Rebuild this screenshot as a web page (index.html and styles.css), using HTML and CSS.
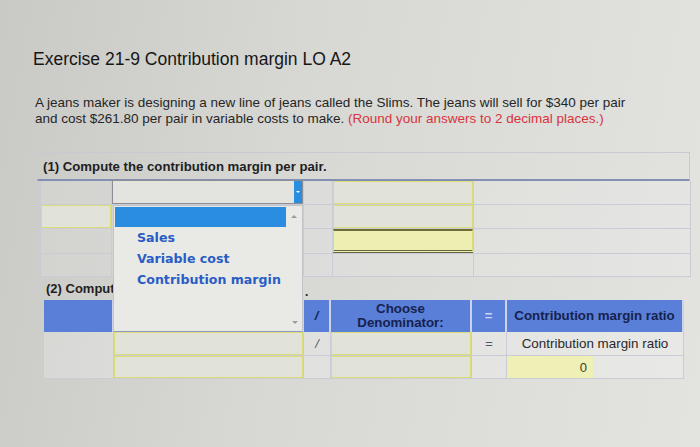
FILE: index.html
```html
<!DOCTYPE html>
<html>
<head>
<meta charset="utf-8">
<link rel="stylesheet" href="styles.css">
</head>
<body>
<div class="page">
  <h1 class="title">Exercise 21-9 Contribution margin LO A2</h1>
  <p class="intro">A jeans maker is designing a new line of jeans called the Slims. The jeans will sell for $340 per pair<br>and cost $261.80 per pair in variable costs to make. <span class="red">(Round your answers to 2 decimal places.)</span></p>

  <section class="part1">
    <div class="p1-head">(1) Compute the contribution margin per pair.</div>
    <div class="p1-grid">
      <div class="c"></div>
      <div class="c sel-cell"><div class="select"><span class="sel-btn"><span class="tri-down-w"></span></span></div></div>
      <div class="c"></div>
      <div class="c"><div class="yin"></div></div>
      <div class="c"></div>

      <div class="c"><div class="yin"></div></div>
      <div class="c"></div>
      <div class="c"></div>
      <div class="c"><div class="yin"></div></div>
      <div class="c"></div>

      <div class="c"></div>
      <div class="c"></div>
      <div class="c"></div>
      <div class="c"><div class="ytotal"></div></div>
      <div class="c"></div>

      <div class="c"></div>
      <div class="c"></div>
      <div class="c"></div>
      <div class="c"></div>
      <div class="c"></div>
    </div>
  </section>

  <section class="part2">
    <div class="p2-head"><span class="p2-label">(2) Comput</span><span class="dot">.</span></div>
    <div class="p2-grid">
      <div class="h"></div>
      <div class="h"></div>
      <div class="h slash">/</div>
      <div class="h">Choose<br>Denominator:</div>
      <div class="h eq">=</div>
      <div class="h">Contribution margin ratio</div>

      <div class="b merged"></div>
      <div class="b"><div class="yin"></div></div>
      <div class="b sym">/</div>
      <div class="b"><div class="yin"></div></div>
      <div class="b sym eqb">=</div>
      <div class="b txt">Contribution margin ratio</div>

      <div class="b"><div class="yin"></div></div>
      <div class="b"></div>
      <div class="b"><div class="yin"></div></div>
      <div class="b"></div>
      <div class="b res"><div class="yres">0</div></div>
    </div>
  </section>

  <div class="dropdown">
    <div class="dd-hl"></div>
    <div class="dd-item">Sales</div>
    <div class="dd-item">Variable cost</div>
    <div class="dd-item">Contribution margin</div>
    <span class="sb-up"></span>
    <span class="sb-down"></span>
  </div>
</div>
</body>
</html>
```

FILE: styles.css
```css
html, body {
  margin: 0;
  padding: 0;
}
body {
  width: 700px;
  height: 447px;
  overflow: hidden;
  background: linear-gradient(100deg, #c9c9c5 0%, #d7d7d4 40%, #e3e3e0 100%);
  font-family: "Liberation Sans", Arial, sans-serif;
  color: #1e1e1e;
}
.page {
  position: relative;
  padding: 48px 0 0 0;
}
.title {
  margin: 0 0 25px 33px;
  font-size: 17.5px;
  line-height: 22px;
  font-weight: normal;
  color: #161616;
}
.intro {
  margin: 0 0 25px 35px;
  font-size: 13.5px;
  line-height: 16px;
  color: #262626;
}
.red {
  color: #d8343c;
}

/* Part 1 */
.part1 {
  margin-left: 37px;
  width: 653px;
}
.p1-head {
  height: 26px;
  line-height: 27px;
  padding-left: 5px;
  font-size: 13.2px;
  font-weight: bold;
  color: #1f1f22;
  border: 1px solid #c7cad3;
  border-bottom: 2px solid #8290b4;
}
.p1-grid {
  margin-left: 3px;
  display: grid;
  grid-template-columns: 71px 192px 29px 141px 217px;
  grid-template-rows: 24px 24px 25px 23px;
  border-left: 1px solid #c9ccd6;
}
.c {
  border-right: 1px solid #c9ccd6;
  border-bottom: 1px solid #c9ccd6;
  display: flex;
  background: rgba(255, 255, 255, 0.12);
}
.yin {
  flex: 1;
  border: 1px solid #dcdc78;
  background: #e2e3d8;
}
.ytotal {
  flex: 1;
  border-top: 2px solid #6e6e34;
  border-bottom: 3px double #66663c;
  border-left: 1px solid #dcdc78;
  border-right: 1px solid #dcdc78;
  background: #eceeb2;
}
.select {
  flex: 1;
  display: flex;
  justify-content: flex-end;
  border: 1px solid #8c8e94;
  background: #e3e3df;
  margin-top: -1px;
}
.sel-btn {
  width: 8px;
  background: #2a8ee0;
  display: flex;
  align-items: center;
  justify-content: center;
}
.tri-down-w {
  width: 0;
  height: 0;
  border-left: 2px solid transparent;
  border-right: 2px solid transparent;
  border-top: 2px solid #ffffff;
}

/* Part 2 */
.part2 {
  margin-left: 43px;
  width: 640px;
}
.p2-head {
  height: 23px;
  line-height: 22px;
  padding-left: 2px;
  font-size: 13px;
  font-weight: bold;
  color: #1f1f22;
  border-left: 1px solid #c9ccd6;
  display: flex;
  align-items: center;
}
.p2-label {
  display: inline-block;
  width: 68px;
  white-space: nowrap;
}
.dot {
  margin-left: 191px;
  margin-top: 6px;
  font-size: 12px;
}
.p2-grid {
  display: grid;
  grid-template-columns: 70px 190px 27px 141px 35px 177px;
  grid-template-rows: 32px 24px 23px;
  border-left: 1px solid #c9ccd6;
}
.h {
  background: #5a7fd8;
  border-right: 2px solid #cdd3e4;
  color: #16224e;
  font-size: 13.3px;
  font-weight: bold;
  display: flex;
  align-items: center;
  justify-content: center;
  text-align: center;
  line-height: 14px;
}
.h:last-child {
  border-right: none;
}
.h.slash {
  font-style: italic;
  font-size: 13px;
}
.h.eq {
  color: #cfd8f2;
  font-size: 13px;
}
.b {
  border-right: 1px solid #c9ccd6;
  border-bottom: 1px solid #c9ccd6;
  background: rgba(255, 255, 255, 0.22);
  display: flex;
}
.b.merged {
  grid-row: span 2;
}
.b.sym {
  align-items: center;
  justify-content: center;
  color: #55585e;
  font-size: 13px;
  font-style: italic;
}
.b.sym.eqb {
  font-style: normal;
}
.b.txt {
  align-items: center;
  justify-content: center;
  font-size: 13.4px;
  color: #2a2a2c;
}
.yres {
  width: 80px;
  padding-right: 6px;
  background: #eef0b6;
  text-align: right;
  font-size: 13px;
  line-height: 23px;
  color: #3a3a3a;
}

/* Dropdown overlay */
.dropdown {
  position: absolute;
  left: 113px;
  top: 205px;
  width: 188px;
  height: 125px;
  background: #e9e9e6;
  border: 1px solid #c3c4c8;
  border-bottom: 1px solid #8d9ac4;
}
.dd-hl {
  margin: 1px 0 0 1px;
  width: 171px;
  height: 20px;
  background: #2b8de0;
}
.dd-item {
  padding-left: 23px;
  height: 21px;
  line-height: 21px;
  font-family: "DejaVu Sans", Verdana, sans-serif;
  font-weight: bold;
  font-size: 12.6px;
  color: #2a5dc4;
}
.sb-up {
  position: absolute;
  left: 177px;
  top: 9px;
  width: 0;
  height: 0;
  border-left: 3px solid transparent;
  border-right: 3px solid transparent;
  border-bottom: 3px solid #9a9ca2;
}
.sb-down {
  position: absolute;
  left: 178px;
  top: 115px;
  width: 0;
  height: 0;
  border-left: 3px solid transparent;
  border-right: 3px solid transparent;
  border-top: 3px solid #9a9ca2;
}
```
